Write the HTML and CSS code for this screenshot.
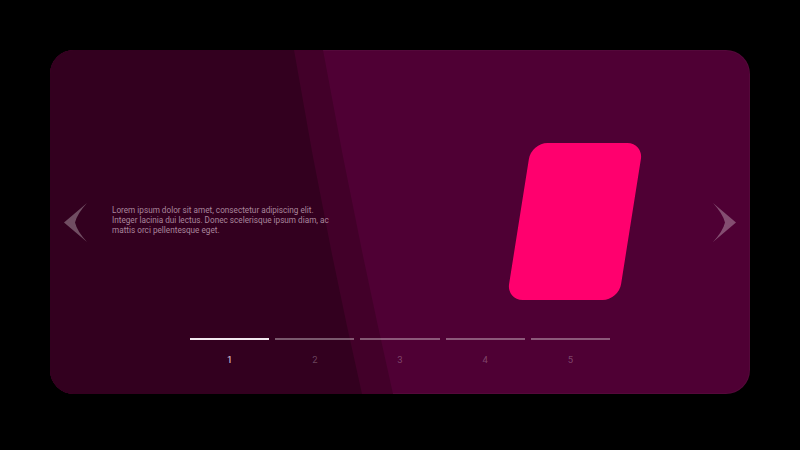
FILE: index.html
```html
<!DOCTYPE html>
<html lang="en">
<head>
<meta charset="utf-8">
<title>Carousel</title>
<link rel="stylesheet" href="styles.css">
</head>
<body>
<div class="stage">
  <section class="card">
    <svg class="decor" viewBox="0 0 700 344" preserveAspectRatio="none" aria-hidden="true">
      <path d="M0 0 H273 Q304 172 343 344 H0 Z" fill="#420029"/>
      <path d="M0 0 H244 Q273 172 312 344 H0 Z" fill="#33001f"/>
    </svg>
    <div class="slide">
      <p class="copy">Lorem ipsum dolor sit amet, consectetur adipiscing elit. Integer lacinia dui lectus. Donec scelerisque ipsum diam, ac mattis orci pellentesque eget.</p>
      <div class="shape"></div>
    </div>
    <button class="arrow prev" aria-label="Previous">
      <svg viewBox="0 0 26 40" width="26" height="40"><path d="M24 0 L1 19.5 L24 39 Q14 28 12 19.5 Q14 11 24 0 Z"/></svg>
    </button>
    <button class="arrow next" aria-label="Next">
      <svg viewBox="0 0 26 40" width="26" height="40"><path d="M2 0 L25 19.5 L2 39 Q12 28 14 19.5 Q12 11 2 0 Z"/></svg>
    </button>
    <nav class="pager">
      <div class="page active"><span class="bar"></span><span class="num">1</span></div>
      <div class="page"><span class="bar"></span><span class="num">2</span></div>
      <div class="page"><span class="bar"></span><span class="num">3</span></div>
      <div class="page"><span class="bar"></span><span class="num">4</span></div>
      <div class="page"><span class="bar"></span><span class="num">5</span></div>
    </nav>
  </section>
</div>
</body>
</html>
```
FILE: styles.css
```css
html, body {
  margin: 0;
  padding: 0;
  background: #000;
  width: 800px;
  height: 450px;
  overflow: hidden;
  font-family: Roboto, "Liberation Sans", sans-serif;
}
.stage {
  padding: 50px;
}
.card {
  position: relative;
  width: 700px;
  height: 344px;
  border-radius: 24px;
  overflow: hidden;
  background: #4f0034;
  box-shadow: inset 0 0 0 1px rgba(255, 255, 255, 0.03);
}
.decor {
  position: absolute;
  inset: 0;
  width: 100%;
  height: 100%;
  display: block;
}
.slide {
  position: relative;
  height: 100%;
  display: flex;
  align-items: center;
  padding-left: 62px;
  padding-bottom: 4px;
  box-sizing: border-box;
}
.copy {
  margin: 0;
  width: 224px;
  flex: none;
  font-size: 8.2px;
  line-height: 10px;
  color: #a9869d;
}
.shape {
  margin-left: 183px;
  width: 112px;
  height: 157px;
  margin-top: 2px;
  flex: none;
  border-radius: 16px;
  background: #ff006e;
  transform: skewX(-9deg);
}
.arrow {
  position: absolute;
  top: 153px;
  width: 26px;
  height: 40px;
  padding: 0;
  border: 0;
  background: none;
}
.arrow svg {
  display: block;
  fill: rgba(255, 255, 255, 0.3);
}
.prev { left: 13px; }
.next { right: 13px; }
.pager {
  position: absolute;
  left: 140px;
  top: 288px;
  width: 420px;
  display: flex;
  gap: 6px;
}
.page {
  flex: 1;
  display: flex;
  flex-direction: column;
  align-items: center;
}
.bar {
  display: block;
  width: 100%;
  height: 2px;
  background: rgba(255, 255, 255, 0.35);
}
.num {
  margin-top: 14px;
  font-size: 9.5px;
  line-height: 11px;
  color: rgba(255, 255, 255, 0.28);
}
.page.active .bar { background: #f2e8ef; }
.page.active .num { color: #e6dae2; }
```
